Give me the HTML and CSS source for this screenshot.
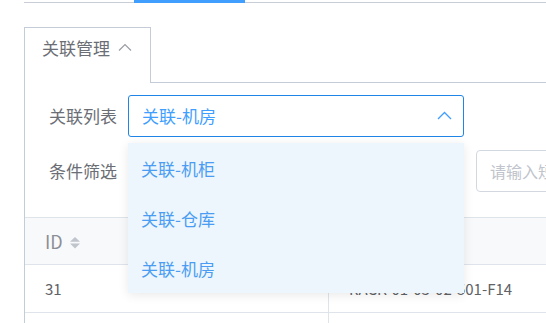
FILE: index.html
```html
<!DOCTYPE html>
<html lang="zh-CN">
<head>
<meta charset="utf-8">
<link rel="stylesheet" href="styles.css">
</head>
<body>
<div class="nav">
  <div class="nav-seg nav-first"></div>
  <div class="nav-active"></div>
  <div class="nav-seg nav-rest"></div>
</div>

<div class="tabs">
  <div class="tab">
    <span>关联管理</span>
    <svg class="tab-arrow" width="14" height="8" viewBox="0 0 14 8"><path d="M1 7.5 L7 1.5 L13 7.5" fill="none" stroke="#9a9da5" stroke-width="1.2"/></svg>
  </div>
  <div class="tab-fill"></div>
</div>

<div class="panel">
  <div class="form-row">
    <div class="label">关联列表</div>
    <div class="select-wrap">
      <div class="select is-focus">
        <span class="select-value">关联-机房</span>
        <svg class="select-arrow" width="15" height="9" viewBox="0 0 15 9"><path d="M1 8 L7.5 1.5 L14 8" fill="none" stroke="#409eff" stroke-width="1.3"/></svg>
      </div>
      <ul class="dropdown">
        <li>关联-机柜</li>
        <li>关联-仓库</li>
        <li>关联-机房</li>
      </ul>
    </div>
  </div>
  <div class="form-row row-2">
    <div class="label">条件筛选</div>
    <div class="select-wrap">
      <div class="select"></div>
    </div>
    <div class="input"><span class="placeholder">请输入短信模板名称</span></div>
  </div>

  <div class="table">
    <div class="th cell col1">
      <span>ID</span>
      <span class="sort">
        <svg width="12" height="12" viewBox="0 0 12 12"><path d="M6 0 L11 4.8 L1 4.8 Z" fill="#c0c4cc"/><path d="M1 6.6 L11 6.6 L6 11.4 Z" fill="#c0c4cc"/></svg>
      </span>
    </div>
    <div class="th cell col2"></div>
    <div class="td cell col1">31</div>
    <div class="td cell col2">RACK-01-03-02-501-F14</div>
    <div class="tr-tail cell col1"></div>
    <div class="tr-tail cell col2"></div>
  </div>
</div>
</body>
</html>
```

FILE: styles.css
```css
html, body {
  margin: 0;
  padding: 0;
  background: #ffffff;
  overflow: hidden;
  font-family: "Noto Sans CJK SC", "Noto Sans", sans-serif;
}

body {
  width: 546px;
  height: 323px;
}

.nav {
  display: flex;
  height: 3px;
  margin-left: 24px;
}

.nav-seg {
  box-sizing: border-box;
  border-bottom: 1px solid #c8cdd6;
}

.nav-first {
  width: 110px;
}

.nav-active {
  width: 111px;
  background: #409eff;
}

.nav-rest {
  flex: 1;
}

.tabs {
  display: flex;
  margin-top: 24px;
  margin-left: 24px;
  height: 56px;
}

.tab {
  box-sizing: border-box;
  width: 127px;
  flex-shrink: 0;
  height: 56px;
  border: 1px solid #c4ccd7;
  border-bottom: none;
  padding: 8px 0 0 17px;
  font-size: 17px;
  line-height: 24px;
  color: #6b6e75;
  display: flex;
  align-items: flex-start;
}

.tab-arrow {
  margin-left: 8px;
  margin-top: 7px;
}

.tab-fill {
  flex: 1;
  box-sizing: border-box;
  border-bottom: 1px solid #c4ccd7;
}

.panel {
  margin-left: 24px;
  border-left: 1px solid #c4ccd7;
  padding-top: 12px;
  height: 240px;
  overflow: hidden;
}

.form-row {
  display: flex;
  align-items: center;
  height: 42px;
}

.row-2 {
  margin-top: 13px;
}

.label {
  box-sizing: border-box;
  width: 103px;
  flex-shrink: 0;
  padding-left: 24px;
  font-size: 17px;
  color: #6b6e75;
  line-height: 24px;
  white-space: nowrap;
}

.select-wrap {
  position: relative;
  width: 336px;
  flex-shrink: 0;
  height: 42px;
}

.select {
  box-sizing: border-box;
  height: 42px;
  border: 1px solid #d5dae2;
  border-radius: 3px;
  display: flex;
  align-items: center;
  justify-content: space-between;
  padding: 0 11px 0 13px;
}

.select.is-focus {
  border-color: #1f85e6;
}

.select-value {
  font-size: 17px;
  color: #409eff;
  line-height: 24px;
}

.select-arrow {
  margin-top: -2px;
}

.dropdown {
  position: absolute;
  top: 48px;
  left: 0;
  width: 336px;
  height: 150px;
  box-sizing: border-box;
  margin: 0;
  padding: 1px 0 0 0;
  list-style: none;
  background: #edf5fd;
  box-shadow: 0 2px 10px rgba(0, 0, 0, 0.09);
  z-index: 10;
}

.dropdown li {
  height: 50px;
  line-height: 50px;
  padding-left: 13px;
  font-size: 17px;
  color: #4a9df2;
}

.input {
  box-sizing: border-box;
  margin-left: 12px;
  width: 200px;
  flex-shrink: 0;
  height: 42px;
  border: 1px solid #d3d8e0;
  border-radius: 4px;
  padding-left: 13px;
  display: flex;
  align-items: center;
  white-space: nowrap;
  overflow: hidden;
}

.placeholder {
  font-size: 16px;
  color: #c0c4cc;
}

.table {
  margin-top: 25px;
  display: grid;
  grid-template-columns: 304px 1fr;
  border-top: 1px solid #dfe4eb;
}

.cell {
  box-sizing: border-box;
  padding-left: 20px;
  display: flex;
  align-items: center;
  border-bottom: 1px solid #dfe4eb;
  white-space: nowrap;
}

.col1 {
  border-right: 1px solid #dfe4eb;
}

.th {
  height: 47px;
  background: #f8f9fb;
  font-size: 18px;
  color: #8b8e96;
}

.td {
  height: 48px;
  font-size: 15px;
  color: #606266;
}

.tr-tail {
  height: 20px;
}

.sort {
  display: flex;
  margin-left: 6px;
  margin-top: 3px;
}
```
